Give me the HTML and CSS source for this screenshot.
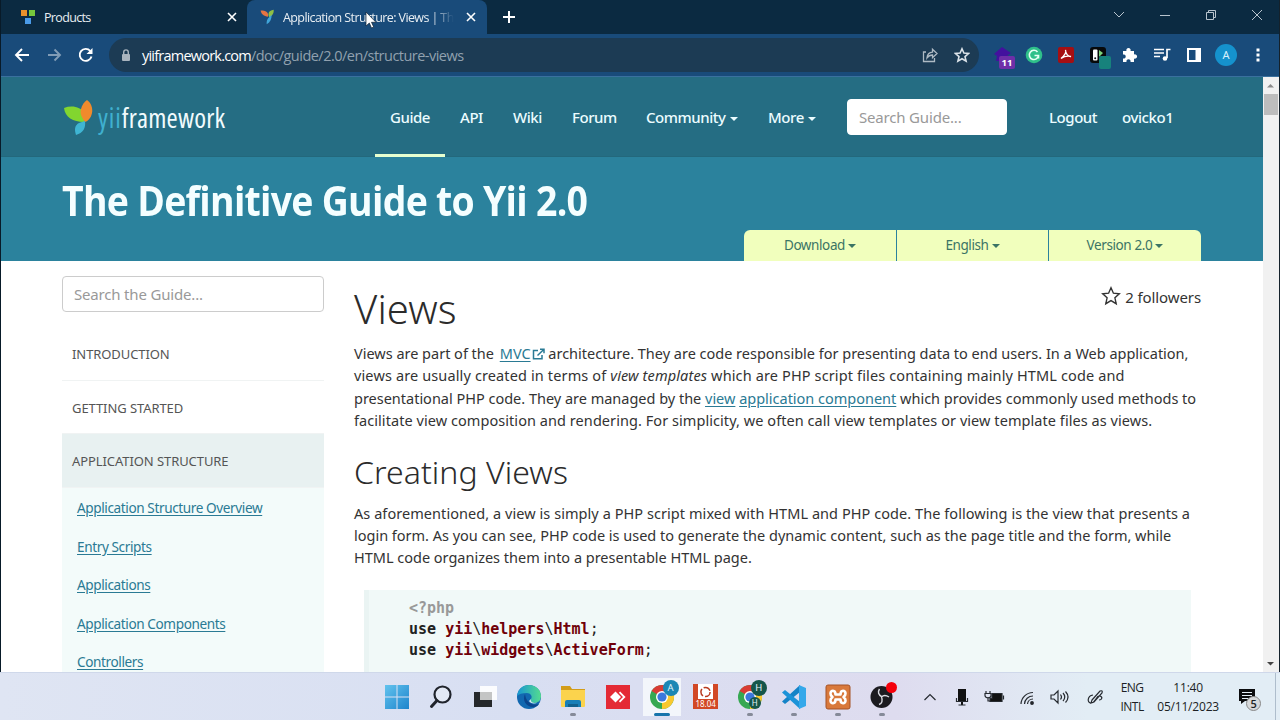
FILE: index.html
```html
<!DOCTYPE html>
<html lang="en">
<head>
  <meta charset="UTF-8" />
  <meta name="viewport" content="width=device-width, initial-scale=1.0"/>
  <title>Application Structure: Views | The Definitive Guide to Yii 2.0</title>
  <link rel="stylesheet" href="styles.css">
</head>
<body>
  <div class="browser">
    <!-- Tabs -->
    <div class="tabs">
      <div class="tab">
        <svg class="favicon" width="16" height="16" viewBox="0 0 16 16"><path fill="#e8912d" d="M1 1h6v6H1z"/><path fill="#77c83c" d="M9 1h6v6H9z"/><path fill="#4a9be8" d="M5 9h6v6H5z"/></svg>
        <span class="tab-title">Products</span>
        <svg class="x" width="10" height="10" viewBox="0 0 10 10"><path d="M1 1l8 8M9 1L1 9"/></svg>
      </div>
      <div class="tab active">
        <svg class="favicon" width="14" height="16" viewBox="0 0 46 52"><path fill="#8fc045" d="M45 2c-9 1-16 5-17 13-1 5 1 9 3 12 8-4 15-12 14-25z"/><path fill="#e57442" d="M2 5c9-2 19 0 23 8 2 4 2 8 1 12C13 24 4 17 2 5z"/><path fill="#40a5da" d="M38 18c1 14-4 25-16 32-1-9 1-18 9-24 3-3 5-5 7-8z"/></svg>
        <span class="tab-title fade">Application Structure: Views | Th</span>
        <svg class="x" width="10" height="10" viewBox="0 0 10 10"><path d="M1 1l8 8M9 1L1 9"/></svg>
      </div>
      <svg class="plus" width="12" height="12" viewBox="0 0 12 12"><path d="M6 0v12M0 6h12"/></svg>
      <div class="window-buttons">
        <svg width="12" height="12" viewBox="0 0 12 12"><path d="M1 3l5 5 5-5"/></svg>
        <svg width="12" height="12" viewBox="0 0 12 12"><path d="M1 6.500h10"/></svg>
        <svg width="12" height="12" viewBox="0 0 12 12"><path d="M1.500 3.500h7v7h-7zM3.500 3V1.500h7v7H9"/></svg>
        <svg width="12" height="12" viewBox="0 0 12 12"><path d="M1 1l10 10M11 1L1 11"/></svg>
      </div>
      <svg class="cursor" width="13" height="18" viewBox="0 0 13 18"><path fill="#fff" stroke="#123" stroke-width=".7" d="M1 1v14l3.300-3 2.200 5 2.200-1-2.200-4.700H11z"/></svg>
    </div>

    <!-- Toolbar -->
    <div class="toolbar">
      <div class="nav-buttons">
        <svg width="16" height="16" viewBox="0 0 16 16"><path d="M15 8H2M8 2L2 8l6 6"/></svg>
        <svg class="dim" width="16" height="16" viewBox="0 0 16 16"><path d="M2 8h12M8.500 2.500L14 8l-5.500 5.500"/></svg>
        <svg width="16" height="16" viewBox="0 0 16 16"><path d="M13.500 9.500A6 6 0 1 1 12.300 4"/><path fill="#fff" stroke="none" d="M14.500 1v6h-6z"/></svg>
      </div>
      <div class="address">
        <svg width="10" height="13" viewBox="0 0 10 13"><rect x="1" y="5" width="8" height="7" rx="1" fill="#a9b4be"/><path fill="none" stroke="#a9b4be" stroke-width="1.400" d="M2.700 5V3.200a2.300 2.300 0 0 1 4.600 0V5"/></svg>
        <span class="url"><b>yiiframework.com</b>/doc/guide/2.0/en/structure-views</span>
        <svg class="share" width="16" height="16" viewBox="0 0 16 16"><path d="M4 5H1.500v9.500h11V11M5 11c.3-4 2.200-5.700 5.500-5.900V2.200L15 6.500l-4.500 4.200V8C8 8 6.500 8.800 5 11z"/></svg>
        <svg class="share star" width="16" height="16" viewBox="0 0 16 16"><path d="M8 1.800l1.900 4.300 4.600.4L11 9.600l1.100 4.600L8 11.800l-4.100 2.400L5 9.600 1.500 6.500l4.600-.4z"/></svg>
      </div>
      <div class="extensions">
        <div class="ext"><svg width="18" height="18" viewBox="0 0 18 18"><path fill="#43119e" d="M9 1l9 6-3 2 1 6H3l1-5-3-2z"/></svg><span class="badge">11</span></div>
        <div class="ext"><svg width="18" height="18" viewBox="0 0 18 18"><circle cx="9" cy="9" r="8.300" fill="#2fc08a"/><path fill="none" stroke="#e6fff4" stroke-width="1.600" d="M12.500 6A4.600 4.600 0 1 0 13.500 9.500H9.500M13.500 9.500v3"/></svg></div>
        <div class="ext"><svg width="18" height="18" viewBox="0 0 18 18"><rect x="1" y="1" width="16" height="16" rx="2" fill="#a60f12"/><path fill="none" stroke="#fff" stroke-width="1.300" d="M8.500 4c1 2-.5 5-4.500 8.500 3-2 6-3 10-2-3 .2-5.500-3-5.500-6.500z"/></svg></div>
        <div class="ext"><svg width="18" height="18" viewBox="0 0 18 18"><rect x="1" y="1" width="16" height="16" rx="3" fill="#07090a"/><rect x="4" y="3.500" width="4.500" height="11" rx="1" fill="#fff"/><circle cx="6.200" cy="12.300" r="1" fill="#111"/><path fill="#7fd37a" d="M10 4l4 3-4 4z"/></svg><span class="badge teal"></span></div>
        <div class="ext"><svg width="16" height="16" viewBox="0 0 16 16"><path fill="#fff" d="M1 4h3.500a2.200 2.200 0 1 1 4 0H12v3.500a2.200 2.200 0 1 1 0 4V15H8.500a2.100 2.100 0 1 0-4 0H1v-3.500a2.100 2.100 0 1 0 0-4z"/></svg></div>
        <div class="ext"><svg width="18" height="16" viewBox="0 0 18 16"><path fill="none" stroke="#fff" stroke-width="1.700" d="M1 2.500h10M1 6h10M1 9.500h6M14 11V2.500h3.500"/><circle cx="12" cy="11.500" r="2.300" fill="#fff"/></svg></div>
        <div class="ext"><svg width="16" height="16" viewBox="0 0 16 16"><path fill="#fff" fill-rule="evenodd" d="M1 1h14v14H1zM3 3v10h6.500V3z"/></svg></div>
        <div class="ext"><span class="avatar">A</span></div>
        <div class="ext"><svg width="4" height="14" viewBox="0 0 4 14"><path fill="#fff" d="M.5.500h3v3h-3zM.5 5.500h3v3h-3zM.5 10.500h3v3h-3z"/></svg></div>
      </div>
    </div>

    <div class="viewport">
      <div class="page">
        <header class="navbar">
          <div class="logo">
            <svg width="34" height="46" viewBox="0 0 34 46">
              <path fill="#82d62f" d="M2 14c8-3 17-1 20 5 2 4 1 6 0 9C11 28 3 23 2 14z"/>
              <path fill="#f08a2c" d="M25 6c4 3 6 8 5 13-1 5-4 8-7 9-4-6-5-8-4-13 1-4 3-7 6-9z"/>
              <path fill="#3fb5d3" d="M23 27c1 7-2 12-9 14-2-6-1-10 3-12 2-1 4-1 6-2z"/>
            </svg>
            <span class="wordmark"><span class="yii">yii</span>framework</span>
          </div>
          <nav>
            <a class="guide">Guide</a>
            <a class="api">API</a>
            <a class="wiki">Wiki</a>
            <a class="forum">Forum</a>
            <a class="community">Community <i class="caret"></i></a>
            <a class="more">More <i class="caret"></i></a>
          </nav>
          <div class="input nav-search">Search Guide...</div>
          <div class="user"><a>Logout</a><a>ovicko1</a></div>
        </header>

        <div class="banner">
          <h1>The Definitive Guide to Yii 2.0</h1>
          <div class="versions">
            <a>Download <i class="caret"></i></a>
            <a>English <i class="caret"></i></a>
            <a>Version 2.0 <i class="caret"></i></a>
          </div>
        </div>

        <div class="content">
          <aside>
            <div class="input">Search the Guide...</div>
            <div class="menu">
              <div class="section">INTRODUCTION</div>
              <div class="section">GETTING STARTED</div>
              <div class="section open">APPLICATION STRUCTURE</div>
              <ul>
                <li><a>Application Structure Overview</a></li>
                <li><a>Entry Scripts</a></li>
                <li><a>Applications</a></li>
                <li><a>Application Components</a></li>
                <li><a>Controllers</a></li>
              </ul>
            </div>
          </aside>
          <main>
            <div class="heading">
              <h2>Views</h2>
              <div class="followers">
                <svg width="20" height="20" viewBox="0 0 20 20"><path fill="none" stroke="#333" stroke-width="1.400" d="M10 1.800l2.400 5.400 5.900.6-4.400 4 1.300 5.900-5.200-3.100-5.200 3.100 1.300-5.900-4.400-4 5.900-.6z"/></svg>
                2 followers
              </div>
            </div>
            <p>
              Views are part of the <a class="mvc">MVC<svg class="external" width="13" height="12" viewBox="0 0 13 12"><path d="M10 7v3.800H1.500V2.500H6M8 1.200h4v4M12 1.200L5.500 7.500"/></svg></a> architecture. They are code responsible for presenting data to end users. In a Web application,<br>
              <span class="wider">views are usually created in terms of <em>view templates</em> which are PHP script files containing mainly HTML code and</span><br>
              presentational PHP code. They are managed by the <a>view</a> <a>application component</a> which provides commonly used methods to<br>
              <span class="wide">facilitate view composition and rendering. For simplicity, we often call view templates or view template files as views.</span>
            </p>
            <h3>Creating Views</h3>
            <p>
              <span class="wide">As aforementioned, a view is simply a PHP script mixed with HTML and PHP code. The following is the view that presents a</span><br>
              login form. As you can see, PHP code is used to generate the dynamic content, such as the page title and the form, while<br>
              HTML code organizes them into a presentable HTML page.
            </p>
<pre><span class="meta">&lt;?php</span>
<b>use</b> <b class="ns">yii</b>\<b class="ns">helpers</b>\<b class="ns">Html</b>;
<b>use</b> <b class="ns">yii</b>\<b class="ns">widgets</b>\<b class="ns">ActiveForm</b>;
</pre>
          </main>
        </div>
      </div>
      <div class="scrollbar">
        <svg width="15" height="17" viewBox="0 0 15 17"><path fill="#8b8b8b" d="M4 10.500L7.500 7l3.500 3.500z"/></svg>
        <div class="thumb"></div>
        <svg class="down" width="15" height="17" viewBox="0 0 15 17"><path fill="#444" d="M4 7l3.500 3.500L11 7z"/></svg>
      </div>
    </div>
  </div>

  <!-- Taskbar -->
  <div class="taskbar">
    <div class="apps">
      <div class="app"><svg width="24" height="24" viewBox="0 0 24 24"><defs><linearGradient id="win" x2="1" y2="1"><stop stop-color="#62c3ee"/><stop offset="1" stop-color="#1d84cc"/></linearGradient></defs><path fill="url(#win)" d="M0 0h11.500v11.500H0zM12.500 0H24v11.500H12.500zM0 12.500h11.500V24H0zM12.500 12.500H24V24H12.500z"/></svg></div>
      <div class="app"><svg width="24" height="24" viewBox="0 0 24 24"><circle cx="13.500" cy="9.500" r="8" fill="#e3e9f5" stroke="#20242c" stroke-width="2.200"/><path stroke="#20242c" stroke-width="3" stroke-linecap="round" d="M8 15.500l-5.500 6"/></svg></div>
      <div class="app"><svg width="24" height="24" viewBox="0 0 24 24"><path fill="#25282b" d="M1 7h18v15H1z"/><path fill="#fbfcfe" d="M7 1h17v14H7z"/><path fill="#c4c5c5" d="M7 7h12v8H7z"/></svg></div>
      <div class="app"><svg width="26" height="26" viewBox="0 0 26 26"><defs><linearGradient id="edge" x2="1"><stop stop-color="#1795d2"/><stop offset="1" stop-color="#54dc8f"/></linearGradient></defs><circle cx="13" cy="13" r="12" fill="#1268b0"/><path fill="url(#edge)" d="M1 12C2 4 8 1 13 1c7 0 12 5 12 11 0 5-4 7-7 7-4 0-5-2-3-4 2-3-1-6-4-6-5 0-8 1-10 3z"/><path fill="#0b458c" d="M9 10c-3 6 1 13 8 13 3 0 5-1 6-3-6 2-13-1-14-10z"/><path fill="#dfe7f5" d="M25 15c-2 5-10 6-12 2l2-2c-1 3 2 4 4 4 2 0 4-1 6-4z"/></svg></div>
      <div class="app running"><svg width="26" height="26" viewBox="0 0 26 26"><path fill="#d39d18" d="M1 2h9l2 3h13v5H1z"/><path fill="#fbd34d" d="M1 6h24v16a1 1 0 0 1-1 1H2a1 1 0 0 1-1-1z"/><path fill="#187fb8" d="M5 23v-5a2 2 0 0 1 2-2h12a2 2 0 0 1 2 2v5z"/><path fill="#11618e" d="M8 20h10v3H8z"/></svg></div>
      <div class="app"><svg width="24" height="24" viewBox="0 0 24 24"><path fill="#e42a35" d="M0 0h24v24H0z"/><path fill="#fff" d="M9.500 6.500l5.500 5.500-5.500 5.500L4 12z"/><path fill="none" stroke="#fff" stroke-width="1.800" d="M13.500 7.200l4.800 4.800-4.800 4.800"/></svg></div>
      <div class="app current"><svg width="26" height="26" viewBox="0 0 26 26"><circle cx="13" cy="13" r="12" fill="#36a852"/><path fill="#d93c35" d="M13 13L2.600 7A12 12 0 0 1 23.400 7z"/><path fill="#f9c82f" d="M13 13l10.400-6A12 12 0 0 1 13 25z"/><circle cx="13" cy="13" r="6" fill="#fff"/><circle cx="13" cy="13" r="4.600" fill="#3c78dc"/></svg><span class="profile">A</span></div>
      <div class="app"><div class="ubuntu"><svg width="15" height="15" viewBox="0 0 15 15"><path fill="#fff" d="M0 0h15v15H0z"/><circle cx="7.500" cy="8" r="4.600" fill="none" stroke="#b93b20" stroke-width="1.500" stroke-dasharray="7.600 2"/></svg><span>18.04</span></div></div>
      <div class="app running"><svg width="26" height="26" viewBox="0 0 26 26"><circle cx="13" cy="13" r="12" fill="#36a852"/><path fill="#d93c35" d="M13 13L2.600 7A12 12 0 0 1 23.400 7z"/><path fill="#f9c82f" d="M13 13l10.400-6A12 12 0 0 1 13 25z"/><circle cx="13" cy="13" r="6" fill="#fff"/><circle cx="13" cy="13" r="4.600" fill="#3c78dc"/></svg><span class="profile green">H</span><span class="profile green small">H</span></div>
      <div class="app running"><svg width="24" height="24" viewBox="0 0 24 24"><path fill="#1583c7" d="M18 0v7L3 19l-3-2.500z"/><path fill="#1c93d8" d="M0 7.500L3 5l15 12v7z"/><path fill="#35a8ea" d="M17 0l7 3v18l-7 3z"/></svg></div>
      <div class="app running"><svg width="26" height="26" viewBox="0 0 26 26"><rect x="1" y="1" width="24" height="24" rx="2" fill="#d9793b" stroke="#a55326"/><path fill="none" stroke="#fff" stroke-width="2.600" stroke-linejoin="round" stroke-linecap="round" d="M10.500 10.500H15.500C15.500 5.500 20.500 6 20.500 9.500c0 2-1 2.500-2 3.500 1 1 2 1.500 2 3.500 0 3.500-5 4-5-1H10.500c0 5-5 4.500-5 1 0-2 1-2.500 2-3.500-1-1-2-1.500-2-3.500 0-3.500 5-4 5 1z"/></svg></div>
      <div class="app running"><svg width="26" height="26" viewBox="0 0 26 26"><circle cx="12.500" cy="13" r="11" fill="#1c1b20"/><path fill="none" stroke="#d9dae0" stroke-width="1.400" d="M10.500 5c-2 3-1 6 2 7.500M20 13c-3-2-6-1.500-7.500 0M10 20.500c3-1 4-4 2.500-7.500"/></svg><span class="record"></span></div>
    </div>
    <div class="tray">
      <svg width="32" height="20" viewBox="0 0 32 20"><path d="M10.500 13L16 7.500l5.500 5.500"/></svg>
      <svg width="32" height="20" viewBox="0 0 32 20"><path fill="#111" stroke="none" d="M12 2h8v12h-8zM15 15h2v3h-2z"/><path d="M10.500 11v3.500h11V11M12.500 18h7"/></svg>
      <svg width="34" height="20" viewBox="0 0 34 20"><path fill="#111" d="M14 6.500h10v8H12v-3h2z"/><path d="M25.500 8.500v4M8 4v2.500M12 4v2.500M7 6.500h6v2c0 3-6 3-6 0zM10 11v3h2"/></svg>
      <svg width="32" height="20" viewBox="0 0 32 20"><circle cx="20" cy="16" r="1.300" fill="#222"/><path d="M9 17A12 12 0 0 1 21 5.500M12.500 17A8.500 8.500 0 0 1 21 9M15.500 17A5.500 5.500 0 0 1 21 12"/></svg>
      <svg width="32" height="20" viewBox="0 0 32 20"><path d="M7 8h3l4-4v12l-4-4H7zM16.500 7.500q2 2.500 0 5M19 6q3.500 4 0 8M21.500 4.500q5 5.500 0 11"/></svg>
      <svg width="38" height="20" viewBox="0 0 38 20"><path d="M16 13l8-9q3-1 2 2l-8 9-3 1zM17 8c-6 1-6 8-2 8 5 0 5-8 9-7 3 1 2 4-1 4"/></svg>
      <div class="lang">ENG<br>INTL</div>
      <div class="clock">11:40<br>05/11/2023</div>
      <div class="notice">
        <svg width="18" height="17" viewBox="0 0 18 17"><path fill="#0b0c0e" stroke="none" d="M1 1h16v12H7l-4 3v-3H1z"/><path stroke="#e4edf5" d="M4 4.500h10M4 7.500h10M4 10.500h6"/></svg>
        <span>5</span>
      </div>
    </div>
  </div>
</body>
</html>
```
FILE: styles.css
```css
* {
  box-sizing: border-box;
}

body {
  margin: 0;
  width: 1280px;
  height: 720px;
  overflow: hidden;
  font-family: "Noto Sans", sans-serif;
  color: #333;
}

svg {
  display: block;
  flex: none;
}

.browser {
  height: 672px;
  display: flex;
  flex-direction: column;
  border-left: 1px solid #081a28;
  border-right: 1px solid #14212b;
}

/* Tabs */
.tabs {
  position: relative;
  height: 34px;
  flex: none;
  display: flex;
  align-items: center;
  background: #0b2a41;
  font: 12.5px "Open Sans", sans-serif;
  letter-spacing: -0.6px;
  color: #e8eef3;
}

.tab {
  display: flex;
  align-items: center;
  width: 246px;
  height: 34px;
  padding: 0 10px 0 19px;
}

.tab.active {
  width: 240px;
  padding: 0 11px 0 13px;
  background: #194b7a;
  border-radius: 8px 8px 0 0;
}

.tab-title {
  flex: 1;
  margin-left: 8px;
  letter-spacing: -0.65px;
  white-space: nowrap;
}

.active .tab-title {
  flex: none;
  width: 171px;
  letter-spacing: -0.6px;
}

.active .favicon {
  margin-right: 1px;
}

.fade {
  -webkit-mask-image: linear-gradient(90deg, #000 86%, transparent);
  mask-image: linear-gradient(90deg, #000 86%, transparent);
}

.x {
  margin-left: auto;
  stroke: #fff;
  stroke-width: 1.6;
}

.plus {
  margin-left: 16px;
  stroke: #fff;
  stroke-width: 2;
}

.window-buttons {
  display: flex;
  gap: 34px;
  margin: -4px 16px 0 auto;
  fill: none;
  stroke: #b8c4ce;
}

.cursor {
  position: absolute;
  left: 364px;
  top: 11px;
}

/* Toolbar */
.toolbar {
  display: flex;
  align-items: center;
  height: 43px;
  flex: none;
  background: #194b7a;
  border-bottom: 1px solid #3a709e;
}

.nav-buttons {
  display: flex;
  gap: 16px;
  padding-left: 13px;
  width: 108px;
  fill: none;
  stroke: #fff;
  stroke-width: 1.9;
}

.dim {
  opacity: 0.45;
}

.address {
  display: flex;
  align-items: center;
  width: 870px;
  height: 34px;
  padding: 0 9px 0 12px;
  border-radius: 17px;
  background: #1c3b54;
}

.url {
  flex: 1;
  margin-left: 11px;
  font: 14.5px "Open Sans", sans-serif;
  letter-spacing: -0.52px;
  color: #91a1af;
}

.url b {
  font-weight: 400;
  letter-spacing: -0.78px;
  color: #fff;
}

.share {
  margin-right: 16px;
  fill: none;
  stroke: #aebac4;
  stroke-width: 1.3;
}

.star {
  margin-right: 0;
  stroke: #dce3e9;
  stroke-width: 1.6;
}

.extensions {
  display: flex;
  margin-left: 7px;
}

.ext {
  position: relative;
  display: flex;
  align-items: center;
  justify-content: center;
  width: 32px;
  height: 32px;
}

.badge {
  position: absolute;
  left: 13px;
  top: 17px;
  width: 16px;
  height: 13px;
  border-radius: 2px;
  background: #6f2fa8;
  color: #fff;
  font: bold 9.5px/13px "Open Sans", sans-serif;
  text-align: center;
}

.badge.teal {
  left: 17px;
  width: 12px;
  background: #17827c;
}

.avatar {
  width: 22px;
  height: 22px;
  border-radius: 50%;
  background: #1592cd;
  color: #d9f1fc;
  font-size: 11px;
  line-height: 22px;
  text-align: center;
}

/* Page */
.viewport {
  display: flex;
  flex: 1;
  min-height: 0;
  background: #fff;
}

.page {
  width: 1262px;
  overflow: hidden;
}

.navbar {
  display: flex;
  align-items: center;
  height: 80px;
  padding-left: 61px;
  background: #256d83;
  border-bottom: 1px solid #23687c;
  font-size: 15px;
  font-weight: 500;
  letter-spacing: -0.45px;
  color: #ebfcff;
}

.logo {
  display: flex;
  align-items: center;
  width: 313px;
  flex: none;
}

.wordmark {
  margin: 2px 0 0 2px;
  font-family: "Open Sans", sans-serif;
  font-stretch: 75%;
  font-size: 27px;
  font-weight: 400;
  line-height: 40px;
  letter-spacing: 0.2px;
  color: #f1fbfd;
}

.yii {
  letter-spacing: 0.9px;
  color: #3fb0cf;
}

nav {
  display: flex;
}

nav a {
  height: 80px;
  padding-left: 15px;
  line-height: 81px;
  white-space: nowrap;
}

.guide {
  width: 70px;
  border-bottom: 3px solid #e6ffd0;
}

.api {
  width: 53px;
}

.wiki {
  width: 59px;
}

.forum {
  width: 74px;
}

.community {
  width: 122px;
}

.more {
  width: 94px;
}

.caret {
  display: inline-block;
  margin-left: 1px;
  border: 4px solid transparent;
  border-top-color: currentColor;
  border-bottom: 0;
  vertical-align: 2px;
}

.input {
  height: 36px;
  padding-left: 11px;
  border: 1px solid #ccc;
  border-radius: 4px;
  background: #fff;
  font-size: 15px;
  font-weight: 400;
  line-height: 35px;
  letter-spacing: -0.18px;
  color: #999;
}

.nav-search {
  width: 160px;
  border-color: #fff;
}

.user {
  display: flex;
  gap: 25px;
  margin-left: 42px;
}

.banner {
  display: flex;
  justify-content: space-between;
  height: 104px;
  padding: 0 62px 0 61px;
  background: #2b829d;
}

h1 {
  width: 525px;
  margin: 0;
  font-family: "Open Sans", sans-serif;
  font-size: 41px;
  line-height: 87px;
  letter-spacing: -0.8px;
  white-space: nowrap;
  font-weight: 700;
  color: #f4feff;
  transform: scaleX(0.913);
  transform-origin: left;
}

.versions {
  display: grid;
  grid-template-columns: 152px 151px 152px;
  gap: 1px;
  width: 457px;
  height: 31px;
  margin-top: 73px;
  border-radius: 6px 6px 0 0;
  overflow: hidden;
  font-size: 13.5px;
  line-height: 30px;
  letter-spacing: -0.4px;
  text-align: center;
  color: #3b7465;
}

.versions a {
  background: #f1ffbd;
}

.versions .caret {
  margin-left: 0;
}

.content {
  display: flex;
  gap: 30px;
  padding: 15px 62px 0 61px;
}

aside {
  width: 262px;
  flex: none;
}

.menu {
  margin-top: 15px;
}

.section {
  height: 54px;
  padding-left: 10px;
  border-bottom: 1px solid #f0f3f3;
  font-size: 13px;
  line-height: 54px;
  letter-spacing: -0.08px;
  color: #555;
}

.section:nth-child(2) {
  height: 53px;
}

.section.open {
  background: #e8f1f1;
}

ul {
  margin: 0;
  padding: 0 0 0 15px;
  list-style: none;
  background: #f3fbfa;
}

li {
  height: 38.5px;
  font-size: 13.6px;
  line-height: 40px;
  letter-spacing: -0.4px;
}

a {
  white-space: nowrap;
}

li a,
p a {
  color: #2a7a94;
  text-decoration: underline;
  text-underline-offset: 2px;
}

main {
  flex: 1;
  min-width: 0;
}

.heading {
  display: flex;
  justify-content: space-between;
  height: 66px;
}

h2,
h3 {
  margin: 0;
  font-weight: 350;
  color: #2b2b2b;
}

h2 {
  font-size: 40px;
  line-height: 65px;
  letter-spacing: 0.1px;
}

h3 {
  margin: 12px 0 3px;
  font-size: 32px;
  line-height: 55px;
  letter-spacing: 0.05px;
}

.followers {
  display: flex;
  gap: 4px;
  margin-top: 10px;
  height: 24px;
  font-size: 15px;
  line-height: 23px;
  letter-spacing: -0.1px;
}

p {
  margin: 0;
  font-size: 14.5px;
  line-height: 22.400px;
  letter-spacing: -0.01px;
  white-space: nowrap;
}

.wide {
  letter-spacing: 0.06px;
}

.wider {
  letter-spacing: 0.13px;
}

.mvc {
  margin-left: 2px;
}

.external {
  display: inline-block;
  margin-left: 1px;
  vertical-align: -1px;
  fill: none;
  stroke: #2a7a94;
  stroke-width: 1.5;
}

pre {
  margin: 21px 10px 0;
  padding: 8px 0 20px 40px;
  border-left: 5px solid #eaf4f3;
  background: #f1f9f8;
  font: 15px/21px "DejaVu Sans Mono", monospace;
  color: #222;
}

.meta {
  font-weight: 700;
  color: #999;
}

.ns {
  color: #700009;
}

.scrollbar {
  display: flex;
  flex-direction: column;
  width: 16px;
  background: #f1f1f1;
}

.thumb {
  width: 14px;
  height: 21px;
  margin-left: 1px;
  background: #bdbdbd;
}

.down {
  margin-top: auto;
}

/* Taskbar */
.taskbar {
  display: flex;
  align-items: center;
  height: 48px;
  padding-left: 375px;
  background: linear-gradient(90deg, #dfe5f3, #d8dff2 40%, #dedcef 70%, #e2edf5 85%);
  border-top: 1px solid #cfd8ea;
}

.apps {
  display: flex;
}

.app {
  position: relative;
  display: flex;
  align-items: center;
  justify-content: center;
  width: 44.1px;
  height: 47px;
}

.app.current {
  background: linear-gradient(#f3f6fb, #f3f6fb) center / 38px 38px no-repeat;
}

/* running indicator under the icon */
.running::after,
.current::after {
  content: "";
  position: absolute;
  bottom: 4px;
  width: 6px;
  height: 3px;
  border-radius: 2px;
  background: #858a98;
}

.current::after {
  width: 16px;
  background: #1774ab;
}

.profile {
  position: absolute;
  left: 23px;
  top: 7px;
  width: 16px;
  height: 16px;
  border-radius: 50%;
  background: #1c87b5;
  color: #e0f4fb;
  font-size: 9.5px;
  line-height: 16px;
  text-align: center;
}

.profile.green {
  background: #15564a;
}

.profile.small {
  top: 24px;
  left: 21px;
  width: 12px;
  height: 12px;
  font-size: 8px;
  line-height: 12px;
}

.ubuntu {
  display: flex;
  flex-direction: column;
  align-items: center;
  width: 25px;
  height: 25px;
  background: #d24825;
  color: #fff;
  font-size: 8px;
  line-height: 9px;
}

.record {
  position: absolute;
  left: 26px;
  top: 9px;
  width: 11px;
  height: 11px;
  border-radius: 50%;
  background: #f5000b;
}

.tray {
  display: flex;
  align-items: center;
  flex: 1;
  margin-left: 10px;
  margin-right: 4px;
  height: 47px;
  border-right: 1px solid #aebdcc;
  fill: none;
  stroke: #262a30;
  stroke-width: 1.2;
  font: 12px/19px "Open Sans", sans-serif;
  color: #1c1f24;
}

.lang {
  width: 36px;
  text-align: center;
  letter-spacing: -0.5px;
}

.clock {
  width: 76px;
  text-align: center;
  letter-spacing: -0.2px;
}

.notice {
  position: relative;
  margin-left: 12px;
}

.notice span {
  position: absolute;
  left: 8px;
  top: 8px;
  width: 15px;
  height: 15px;
  border: 1px solid #888;
  border-radius: 50%;
  background: #d6d8da;
  font-size: 11px;
  font-weight: 600;
  line-height: 13px;
  text-align: center;
}
```
